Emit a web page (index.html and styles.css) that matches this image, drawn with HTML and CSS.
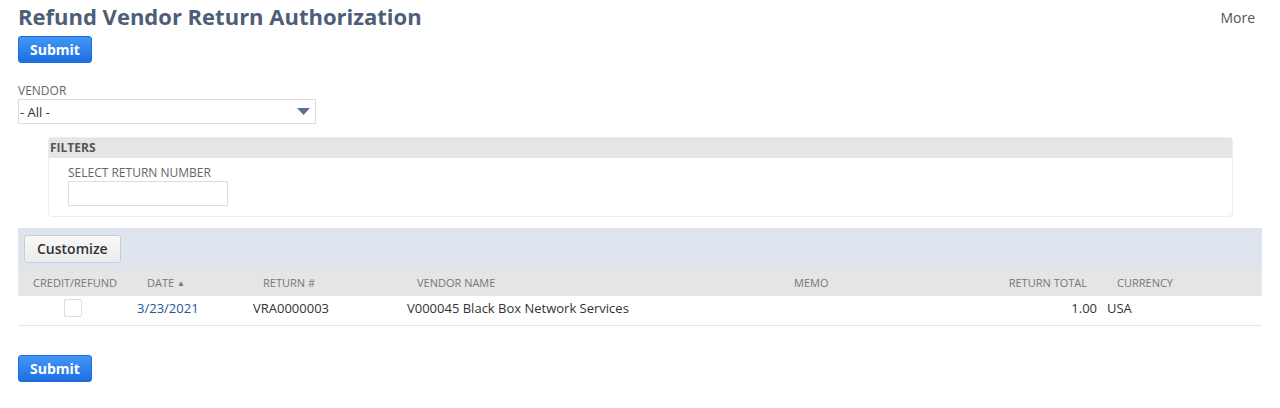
FILE: index.html
```html
<!DOCTYPE html>
<html lang="en">
<head>
  <meta charset="UTF-8">
  <meta name="viewport" content="width=device-width,initial-scale=1">
  <title>Refund Vendor Return Authorization</title>
  <link rel="stylesheet" href="styles.css">
</head>
<body>

  <div class="page-head">
    <h1>Refund Vendor Return Authorization</h1>
    <a href="#" class="more">More</a>
  </div>

  <div class="actions">
    <button type="button" class="btn-primary">Submit</button>
  </div>

  <div class="field vendor">
    <label for="vendor">Vendor</label>
    <div class="select">
      <span>- All -</span>
      <svg width="13" height="7" viewBox="0 0 13 7"><path d="M0 0 H13 L6.5 7 Z" fill="#5b7190"/></svg>
    </div>
  </div>

  <div class="filters">
    <div class="filters-head">Filters</div>
    <div class="filters-body">
      <label for="retnum">Select Return Number</label>
      <input type="text" id="retnum">
    </div>
  </div>

  <div class="list">
    <div class="list-bar">
      <button type="button" class="btn-secondary">Customize</button>
    </div>
    <table>
      <colgroup>
        <col class="c-check"><col class="c-date"><col class="c-num"><col class="c-vendor">
        <col class="c-memo"><col class="c-total"><col class="c-cur">
      </colgroup>
      <thead>
        <tr>
          <th class="center">Credit/Refund</th>
          <th>Date <span class="sort">&#9650;</span></th>
          <th>Return #</th>
          <th>Vendor Name</th>
          <th>Memo</th>
          <th class="right">Return Total</th>
          <th>Currency</th>
        </tr>
      </thead>
      <tbody>
        <tr>
          <td class="center"><span class="checkbox"></span></td>
          <td><a href="#">3/23/2021</a></td>
          <td>VRA0000003</td>
          <td>V000045 Black Box Network Services</td>
          <td></td>
          <td class="right">1.00</td>
          <td>USA</td>
        </tr>
      </tbody>
    </table>
  </div>

  <div class="actions bottom">
    <button type="button" class="btn-primary">Submit</button>
  </div>

</body>
</html>
```

FILE: styles.css
```css
body { font-family: "Open Sans", Arial, sans-serif; margin:0; padding:0 18px; background:#fff; color:#333; }
.page-head { display:flex; justify-content:space-between; align-items:flex-start; }
h1 { margin:3px 0 0; font-size:22px; font-weight:700; color:#4d5e78; line-height:26px; }
.more { margin:8px 7px 0 0; font-size:14px; color:#555; text-decoration:none; }
.actions { margin-top:7px; }
.actions.bottom { margin-top:29px; }
.btn-primary { height:27px; padding:0 11px; font-family:inherit; font-size:14px; font-weight:700; color:#fff; border:1px solid #1f6ad8; border-radius:3px; background:linear-gradient(#4496f5, #1d6fe3); }
.field.vendor { margin-top:21px; }
.field label { display:block; font-size:12px; color:#666; text-transform:uppercase; line-height:14px; margin-bottom:1px; }
.select { box-sizing:border-box; width:298px; height:25px; border:1px solid #ddd; display:flex; justify-content:space-between; align-items:center; font-size:13px; color:#333; padding-right:5px; }
.select span { padding-left:1px; }
.filters { margin:13px 29px 0 30px; border:1px solid #ececec; border-radius:4px; }
.filters-head { background:#e5e5e5; height:20px; line-height:20px; padding-left:1px; font-size:12px; font-weight:700; color:#555; text-transform:uppercase; }
.filters-body { padding:8px 19px 12px; height:38px; }
.filters-body label { display:block; font-size:12px; color:#666; text-transform:uppercase; line-height:14px; margin-bottom:1px; }
.filters-body input { width:158px; height:23px; margin:0; padding:0; border:1px solid #ddd; }
.list { margin-top:11px; }
.list-bar { background:#dfe5ef; height:41px; display:flex; align-items:center; padding-left:6px; }
.btn-secondary { height:28px; padding:0 12px; font-family:inherit; font-size:14px; font-weight:600; color:#333; border:1px solid #ccc; border-radius:3px; background:linear-gradient(#f8f8f8, #ececec); }
table { width:100%; border-collapse:collapse; table-layout:fixed; }
col.c-check { width:114px; }
col.c-date { width:116px; }
col.c-num { width:154px; }
col.c-vendor { width:377px; }
col.c-memo { width:191px; }
col.c-total { width:132px; }
col.c-cur { width:160px; }
th { background:#e5e5e5; height:27px; padding:0 15px; font-size:11px; font-weight:400; color:#777; text-transform:uppercase; text-align:left; white-space:nowrap; }
th.center { padding:0; text-align:center; }
th .sort { font-size:8px; vertical-align:1px; }
td { height:26px; padding:3px 5px 0; font-size:13px; line-height:18px; vertical-align:top; color:#333; border-bottom:1px solid #e5e5e5; white-space:nowrap; }
td.center { text-align:center; padding:3px 0 0; }
td a { color:#255599; text-decoration:none; }
.center { text-align:center; }
.right { text-align:right; }
.checkbox { display:inline-block; width:16px; height:16px; border:1px solid #ddd; border-radius:2px; vertical-align:top; margin-left:-4px; }
```
